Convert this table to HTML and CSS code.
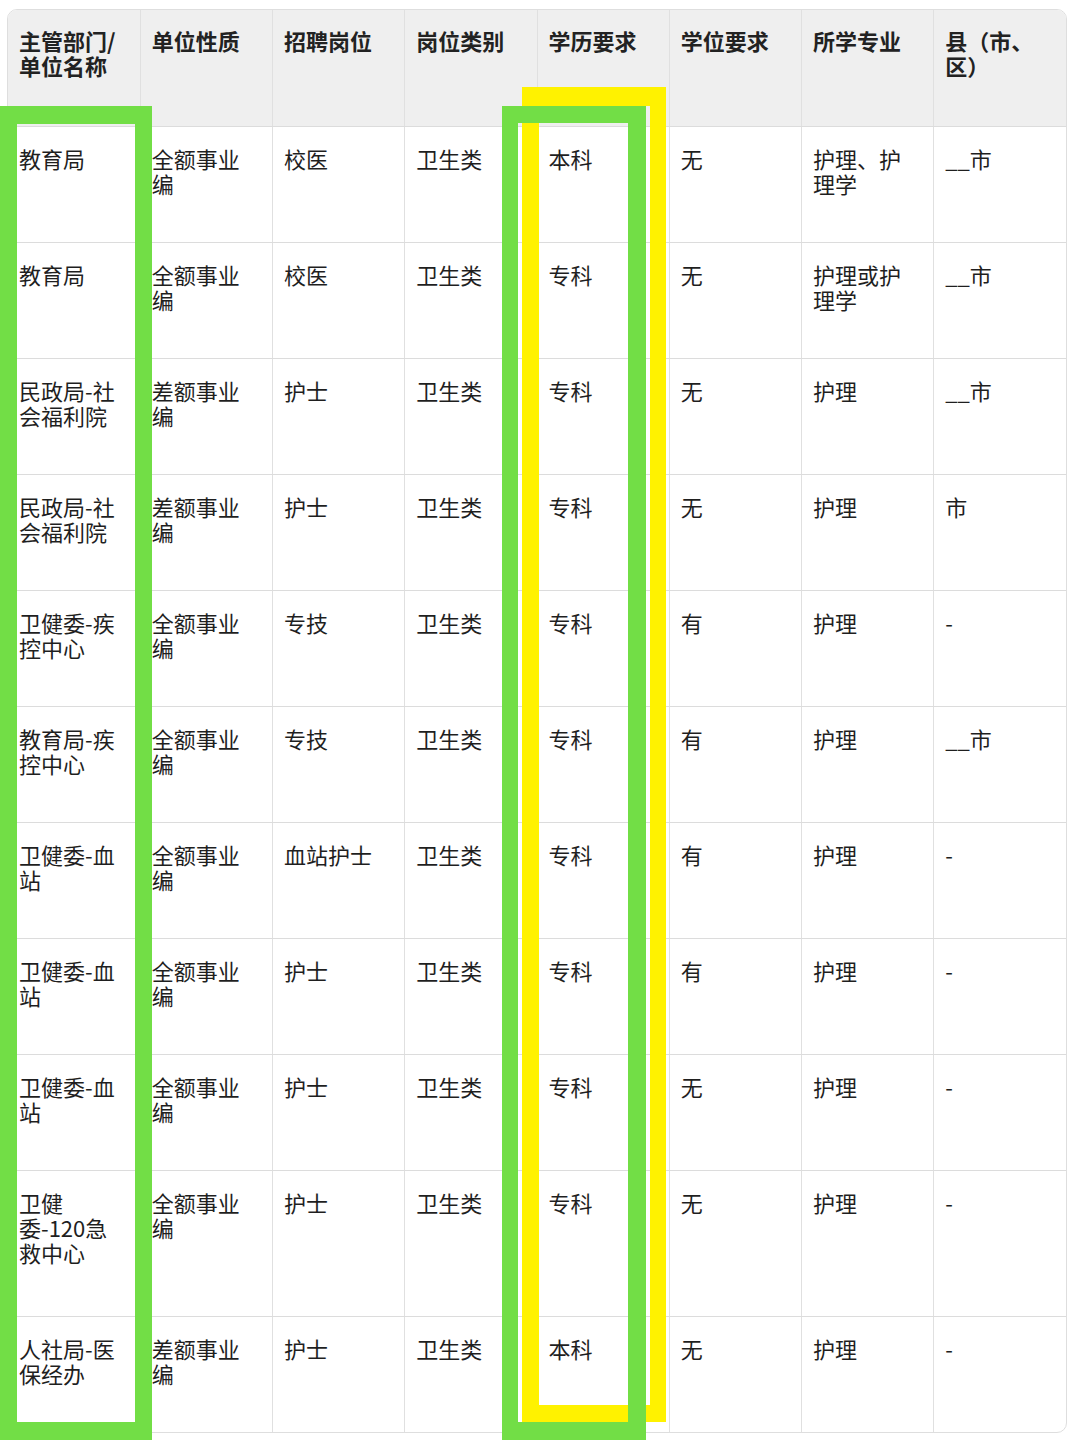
FILE: index.html
```html
<!DOCTYPE html>
<html lang="zh-CN">
<head>
<meta charset="utf-8">
<title>招聘岗位表</title>
<link rel="stylesheet" href="styles.css">
</head>
<body>
<div class="page">
  <div class="table-wrap">
    <table class="jobs">
      <colgroup>
        <col class="c"><col class="c"><col class="c"><col class="c"><col class="c"><col class="c"><col class="c"><col class="c">
      </colgroup>
      <thead>
        <tr>
          <th>主管部门/单位名称</th><th>单位性质</th><th>招聘岗位</th><th>岗位类别</th><th>学历要求</th><th>学位要求</th><th>所学专业</th><th>县（市、区）</th>
        </tr>
      </thead>
      <tbody>
        <tr><td>教育局</td><td>全额事业编</td><td>校医</td><td>卫生类</td><td>本科</td><td>无</td><td>护理、护理学</td><td>__市</td></tr>
        <tr><td>教育局</td><td>全额事业编</td><td>校医</td><td>卫生类</td><td>专科</td><td>无</td><td>护理或护理学</td><td>__市</td></tr>
        <tr><td>民政局-社会福利院</td><td>差额事业编</td><td>护士</td><td>卫生类</td><td>专科</td><td>无</td><td>护理</td><td>__市</td></tr>
        <tr><td>民政局-社会福利院</td><td>差额事业编</td><td>护士</td><td>卫生类</td><td>专科</td><td>无</td><td>护理</td><td>市</td></tr>
        <tr><td>卫健委-疾控中心</td><td>全额事业编</td><td>专技</td><td>卫生类</td><td>专科</td><td>有</td><td>护理</td><td>-</td></tr>
        <tr><td>教育局-疾控中心</td><td>全额事业编</td><td>专技</td><td>卫生类</td><td>专科</td><td>有</td><td>护理</td><td>__市</td></tr>
        <tr><td>卫健委-血站</td><td>全额事业编</td><td>血站护士</td><td>卫生类</td><td>专科</td><td>有</td><td>护理</td><td>-</td></tr>
        <tr><td>卫健委-血站</td><td>全额事业编</td><td>护士</td><td>卫生类</td><td>专科</td><td>有</td><td>护理</td><td>-</td></tr>
        <tr><td>卫健委-血站</td><td>全额事业编</td><td>护士</td><td>卫生类</td><td>专科</td><td>无</td><td>护理</td><td>-</td></tr>
        <tr class="tall"><td>卫健委-120急救中心</td><td>全额事业编</td><td>护士</td><td>卫生类</td><td>专科</td><td>无</td><td>护理</td><td>-</td></tr>
        <tr><td>人社局-医保经办</td><td>差额事业编</td><td>护士</td><td>卫生类</td><td>本科</td><td>无</td><td>护理</td><td>-</td></tr>
      </tbody>
    </table>
  </div>

  <div class="mark mark-yellow"></div>
  <div class="mark mark-green mark-green-1"></div>
  <div class="mark mark-green mark-green-2"></div>
</div>
</body>
</html>
```

FILE: styles.css
```css
html, body {
  margin: 0;
  padding: 0;
  background: #ffffff;
}

body {
  width: 1080px;
  height: 1440px;
  overflow: hidden;
  font-family: "Noto Sans CJK SC", "Noto Sans", sans-serif;
  color: #1f1f1f;
}

.page {
  position: relative;
  width: 1080px;
  height: 1440px;
  padding: 9px 0 0 7px;
  box-sizing: border-box;
}

.table-wrap {
  width: 1060px;
  border: 1px solid #dedede;
  border-radius: 10px;
  overflow: hidden;
  box-sizing: border-box;
}

.jobs {
  width: 100%;
  border-collapse: collapse;
  table-layout: fixed;
  font-size: 22px;
  line-height: 25px;
}

.jobs col.c {
  width: 12.5%;
}

.jobs th,
.jobs td {
  text-align: left;
  vertical-align: top;
  padding: 18px 12px 0 11px;
  border-right: 1px solid #e0e0e0;
  border-bottom: 1px solid #dcdcdc;
  word-break: normal;
}

.jobs th:last-child,
.jobs td:last-child {
  border-right: none;
}

.jobs tbody tr:last-child td {
  border-bottom: none;
}

.jobs thead tr {
  height: 116px;
  background: #efefef;
}

.jobs th {
  font-weight: 700;
  color: #222222;
}

.jobs td {
  padding-top: 19px;
  font-weight: 400;
}

.jobs tbody tr {
  height: 116px;
}

.jobs tbody tr.tall {
  height: 146px;
}

/* annotation boxes drawn over the table */
.mark {
  position: absolute;
  box-sizing: border-box;
  pointer-events: none;
}

.mark-yellow {
  left: 522px;
  top: 87px;
  width: 144px;
  height: 1335px;
  border: 17px solid #fff200;
  border-right-width: 16px;
  border-top-width: 19px;
}

.mark-green {
  border: 17px solid #72de46;
  height: 1360px;
}

.mark-green-1 {
  left: 0;
  top: 106px;
  width: 152px;
  border-top-width: 18px;
  border-bottom-width: 44px;
}

.mark-green-2 {
  left: 502px;
  top: 106px;
  width: 144px;
  border-width: 17px 18px 44px 16px;
}
```
